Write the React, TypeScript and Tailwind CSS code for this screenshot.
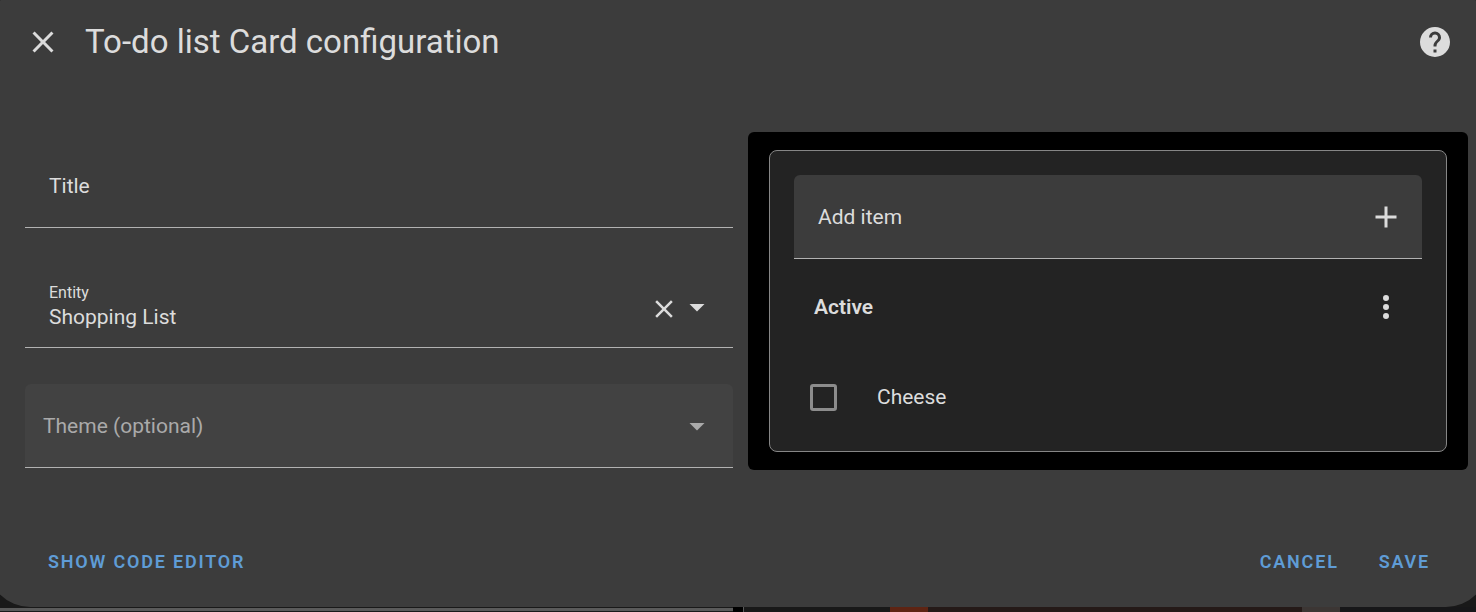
import React, { useState } from "react";

const paths = {
  close:
    "M19,6.41L17.59,5L12,10.59L6.41,5L5,6.41L10.59,12L5,17.59L6.41,19L12,13.41L17.59,19L19,17.59L13.41,12L19,6.41Z",
  help: "M15.07,11.25L14.17,12.17C13.45,12.89 13,13.5 13,15H11V14.5C11,13.39 11.45,12.39 12.17,11.67L13.41,10.41C13.78,10.05 14,9.55 14,9C14,7.89 13.1,7 12,7A2,2 0 0,0 10,9H8A4,4 0 0,1 12,5A4,4 0 0,1 16,9C16,9.88 15.64,10.67 15.07,11.25M13,19H11V17H13M12,2A10,10 0 0,0 2,12A10,10 0 0,0 12,22A10,10 0 0,0 22,12C22,6.47 17.5,2 12,2Z",
  menuDown: "M7,10L12,15L17,10H7Z",
  plus: "M19,13H13V19H11V13H5V11H11V5H13V11H19V13Z",
  dots: "M12,16A2,2 0 0,1 14,18A2,2 0 0,1 12,20A2,2 0 0,1 10,18A2,2 0 0,1 12,16M12,10A2,2 0 0,1 14,12A2,2 0 0,1 12,14A2,2 0 0,1 10,12A2,2 0 0,1 12,10M12,4A2,2 0 0,1 14,6A2,2 0 0,1 12,8A2,2 0 0,1 10,6A2,2 0 0,1 12,4Z",
};

function Icon({ name, className = "size-9" }: { name: keyof typeof paths; className?: string }) {
  return (
    <svg viewBox="0 0 24 24" fill="currentColor" aria-hidden="true" className={`shrink-0 ${className}`}>
      <path d={paths[name]} />
    </svg>
  );
}

function IconButton({
  label,
  name,
  iconClass,
  className = "",
  onClick,
}: {
  label: string;
  name: keyof typeof paths;
  iconClass?: string;
  className?: string;
  onClick?: () => void;
}) {
  return (
    <button type="button" aria-label={label} onClick={onClick} className={`flex shrink-0 cursor-pointer ${className}`}>
      <Icon name={name} className={iconClass} />
    </button>
  );
}

function Header() {
  return (
    <header className="flex h-[84px] items-center gap-6 pl-[25px] pr-[23px]">
      <IconButton label="Close" name="close" />
      <h1 className="flex-1 text-[33px] leading-10">To-do list Card configuration</h1>
      <IconButton label="Help" name="help" />
    </header>
  );
}

function Editor() {
  const [entity, setEntity] = useState("Shopping List");
  return (
    <form className="flex flex-col gap-9 pt-3">
      <label className="flex h-[84px] items-center gap-3 border-b border-[#b2b2b2] px-6">
        <span>Title</span>
        <input type="text" className="min-w-0 flex-1 bg-transparent outline-none" />
      </label>

      <div className="flex h-[84px] items-center border-b border-[#b2b2b2] pl-6 pr-[18px] pt-0.5">
        <div className="flex min-w-0 flex-1 flex-col">
          <label htmlFor="entity" className="text-base leading-5">
            Entity
          </label>
          <input
            id="entity"
            type="text"
            value={entity}
            onChange={(e) => setEntity(e.target.value)}
            className="h-7 bg-transparent outline-none"
          />
        </div>
        <IconButton
          label="Clear"
          name="close"
          iconClass="size-[30px]"
          className="pt-1"
          onClick={() => setEntity("")}
        />
        <IconButton label="Open entity list" name="menuDown" />
      </div>

      <div className="flex h-[84px] items-center gap-3 rounded-t-md border-b border-[#b2b2b2] bg-[#424242] px-[18px] text-[#aaaaaa]">
        <label htmlFor="theme">Theme (optional)</label>
        <select id="theme" defaultValue="" className="min-w-0 flex-1 appearance-none bg-transparent outline-none">
          <option value=""></option>
        </select>
        <Icon name="menuDown" />
      </div>
    </form>
  );
}

function Preview() {
  return (
    <section aria-label="Preview" className="rounded-md bg-black px-[21px] py-[18px]">
      <div className="rounded-lg border border-[#868686] bg-[#232323] px-6 pb-3 pt-6">
        <div className="flex h-[84px] items-center gap-3 rounded-t-md border-b border-[#b2b2b2] bg-[#3c3c3c] pl-6 pr-[18px]">
          <label htmlFor="add-item">Add item</label>
          <input id="add-item" type="text" className="min-w-0 flex-1 bg-transparent outline-none" />
          <IconButton label="Add" name="plus" />
        </div>
        <div className="flex h-24 items-center justify-between pl-5 pr-[18px]">
          <h2 className="font-semibold">Active</h2>
          <IconButton label="List menu" name="dots" />
        </div>
        <label className="flex h-[84px] items-center gap-10 pl-4">
          <input
            type="checkbox"
            className="size-[27px] appearance-none rounded-[3px] border-3 border-[#8c8c8c] checked:bg-[#5f9fd8]"
          />
          <span>Cheese</span>
        </label>
      </div>
    </section>
  );
}

function TextButton({ children }: { children: React.ReactNode }) {
  return (
    <button
      type="button"
      className="cursor-pointer text-[18px] font-semibold uppercase leading-6 tracking-widest text-[#5f9cd6]"
    >
      {children}
    </button>
  );
}

function Backdrop() {
  return (
    <div aria-hidden="true" className="flex h-[5px] overflow-hidden">
      <div className="mt-px flex-1 border-b border-[#1a1a1a] bg-[#5a5a5a]" />
      <div className="w-[10px] bg-black" />
      <div className="flex flex-1 border-l border-[#5a5a5a]">
        <div className="w-1/5 bg-[#191919]" />
        <div className="w-[38px] bg-[#5e2413]" />
        <div className="flex-1 bg-[#251a18]" />
        <div className="w-[38px] bg-[#3c3634]" />
        <div className="w-[136px] bg-[#171719]" />
      </div>
    </div>
  );
}

export default function App() {
  return (
    <div className="overflow-hidden bg-[#191919] font-[Roboto,sans-serif] text-[21px] leading-7 text-[#dcdcdc]">
      <div role="dialog" aria-label="To-do list Card configuration" className="-mx-3 -mt-3 rounded-[42px] bg-[#3c3c3c] px-3 pt-3">
        <Header />
        <main className="grid grid-cols-[59fr_60fr] items-start gap-[15px] pb-[46px] pl-[25px] pr-2 pt-12">
          <Editor />
          <Preview />
        </main>
        <footer className="flex h-[91px] items-center justify-between pl-12 pr-[46px]">
          <TextButton>Show code editor</TextButton>
          <div className="flex gap-10">
            <TextButton>Cancel</TextButton>
            <TextButton>Save</TextButton>
          </div>
        </footer>
      </div>
      <Backdrop />
    </div>
  );
}
